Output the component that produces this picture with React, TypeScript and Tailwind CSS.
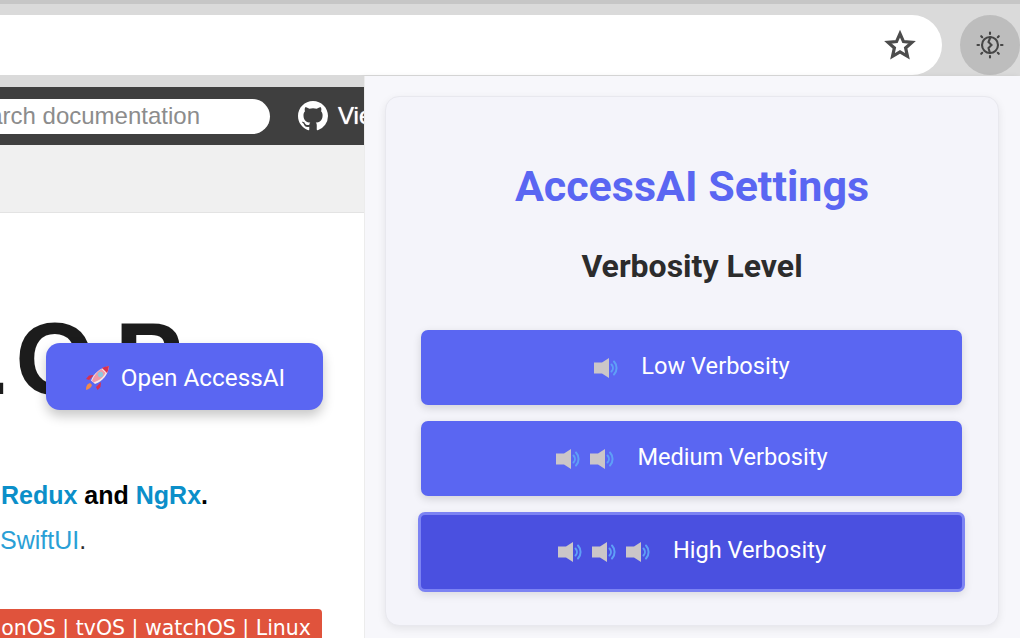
const Speaker = () => (
  <svg viewBox="0 0 26 22" className="h-[22px] w-[26px] shrink-0">
    <path d="M1 5.500h8L16 1v20l-7-4.500H1z" fill="#cbc6c8" />
    <path d="M18.500 7.500a5 5 0 0 1 0 7" fill="none" stroke="#5f9ff7" strokeWidth="2" strokeLinecap="round" />
    <path d="M21 4.500a9.500 9.500 0 0 1 0 13" fill="none" stroke="#5f9ff7" strokeWidth="2" strokeLinecap="round" />
  </svg>
)

const Rocket = () => (
  <svg viewBox="0 0 26 26" className="h-[26px] w-[26px] shrink-0">
    <path d="M2 25c0-4 1-6 4-7l2 2c-1 3-3 4-6 5z" fill="#f08a4b" />
    <path d="M5 15l5-5-5 .5-3 3.500z M12 22l5-5-.5 5-3 3z" fill="#d9304f" />
    <path d="M7 15.500C10 8 16 3 25 1c-1 9-6 15-14 18z" fill="#f4e9ea" />
    <path d="M9.500 17.500L8 15.500C11 9 14 6 17.500 4l4 4c-2 4-5 7-12 9.500z" fill="#ef5a6f" fillOpacity="0.55" />
    <path d="M18 3c2-1 4.500-1.700 7-2-.3 2.500-1 5-2 7z" fill="#d9304f" />
    <circle cx="16.500" cy="9.500" r="2.700" fill="#8fc7de" />
  </svg>
)

const GithubMark = () => (
  <svg viewBox="0 0 16 16" className="h-[30px] w-[30px] shrink-0" fill="#ffffff">
    <path d="M8 0C3.580 0 0 3.580 0 8c0 3.540 2.290 6.530 5.470 7.590.4.070.55-.17.55-.38 0-.19-.01-.82-.01-1.490-2.010.37-2.530-.49-2.690-.94-.09-.23-.48-.94-.82-1.130-.28-.15-.68-.52-.01-.53.630-.01 1.080.58 1.230.82.720 1.210 1.870.87 2.330.66.070-.52.280-.87.510-1.070-1.780-.2-3.640-.89-3.640-3.950 0-.87.310-1.590.820-2.150-.08-.2-.36-1.020.08-2.120 0 0 .67-.21 2.200.82.640-.18 1.320-.27 2-.27s1.360.09 2 .27c1.530-1.040 2.200-.82 2.200-.82.440 1.100.16 1.920.08 2.120.51.56.82 1.270.82 2.150 0 3.070-1.870 3.750-3.650 3.950.290.250.540.730.540 1.480 0 1.070-.01 1.930-.01 2.200 0 .21.150.46.550.38A8.010 8.010 0 0 0 16 8c0-4.420-3.580-8-8-8z" />
  </svg>
)

const levels = [
  { label: 'Low Verbosity', icons: 1, box: 'h-[75px] bg-[#5a66f2] ml-[35px] mr-[36px] mb-[16px] shadow-[0_3px_8px_rgba(0,0,0,0.14)]' },
  { label: 'Medium Verbosity', icons: 2, box: 'h-[75px] bg-[#5a66f2] ml-[35px] mr-[36px] mb-[16px] shadow-[0_3px_8px_rgba(0,0,0,0.14)]' },
  { label: 'High Verbosity', icons: 3, box: 'h-[80px] bg-[#4a50e0] ml-[32px] mr-[33px] border-[3px] border-[#7c83f3] shadow-[0_3px_8px_rgba(0,0,0,0.1)]' },
]

export default function App() {
  return (
    <div className="h-[638px] w-[1020px] overflow-hidden bg-[#dadada] font-['Liberation_Sans',sans-serif]">
      <div className="h-[4px] bg-[#c6c6c6]" />
      <div className="flex h-[72px] items-start">
        <div className="mt-[11px] flex h-[60px] w-[942px] items-center justify-end rounded-r-[30px] bg-white pr-[26px]">
          <svg viewBox="0 0 24 24" className="h-[32px] w-[32px]" fill="none" stroke="#4c4c4c" strokeWidth="2.400" strokeLinejoin="miter">
            <path d="M12 3.500l2.600 5.900 6.400.6-4.800 4.200 1.400 6.300L12 17.200l-5.600 3.300 1.400-6.300L3 10l6.400-.6z" />
          </svg>
        </div>
        <div className="ml-[18px] mt-[11px] flex h-[60px] w-[60px] items-center justify-center rounded-full bg-[#bdbdbd]">
          <svg viewBox="0 0 28 28" className="h-[28px] w-[28px]" fill="none" stroke="#464646" strokeWidth="2.100" strokeLinecap="round">
            <circle cx="14" cy="14" r="8" />
            <path d="M14.500 6l-2 5 3 3-3 3 1.500 5M14 1.500v1.500M14 25v1.500M1.500 14H3M25 14h1.500M5.200 5.200l1 1M21.800 21.800l1 1M22.800 5.200l-1 1M6.200 21.800l-1 1" />
          </svg>
        </div>
      </div>

      <div className="flex h-[562px]">
        <div className="relative w-[364px] shrink-0 overflow-hidden bg-white">
          <div className="h-[11px] bg-[#dadada]" />
          <div className="flex h-[58px] items-center gap-[28px] overflow-hidden bg-[#3f3f3f]">
            <div className="flex h-[35px] w-[270px] shrink-0 items-center justify-end overflow-hidden rounded-r-[18px] bg-white pr-[70px] text-[24px] whitespace-nowrap text-[#8c8c8c]">
              Search documentation
            </div>
            <GithubMark />
            <span className="-ml-[18px] text-[24px] whitespace-nowrap text-white [text-shadow:0_0_1px_#ffffff]">View</span>
          </div>
          <div className="h-[68px] border-b border-[#e3e3e3] bg-[#f0f0f0]" />
          <div className="-ml-[56px] mt-[98px] h-[96px] text-[102px] leading-[96px] font-bold whitespace-nowrap text-[#1c1c1c]">
            <span className="tracking-[9px]">L</span>
            <span className="tracking-[20px]">O</span>P
          </div>
          <div className="mt-[74px] pl-[1px] text-[25px] leading-[28px] font-bold whitespace-nowrap text-black">
            <span className="text-[#0b8fc9]">Redux</span> and <span className="text-[#0b8fc9]">NgRx</span>.
          </div>
          <div className="mt-[17px] text-[25px] leading-[28px] whitespace-nowrap text-[#2d2d2d]">
            <span className="text-[#2a9fd6]">SwiftUI</span>.
          </div>
          <div className="mt-[55px] flex h-[40px] w-[322px] justify-end overflow-hidden rounded-r-[4px] bg-[#e0533c] pt-[4px] pr-[11px] font-['DejaVu_Sans',sans-serif] text-[20.500px] whitespace-nowrap text-white">
            onOS | tvOS | watchOS | Linux
          </div>
          <div className="absolute top-[267px] left-[46px] flex h-[67px] w-[277px] items-center justify-center gap-[11px] rounded-[14px] bg-[#5a66f2] pt-[3px] font-['Roboto',sans-serif] text-[24.300px] text-white shadow-[0_6px_12px_rgba(0,0,0,0.22)]">
            <Rocket />
            Open AccessAI
          </div>
        </div>

        <div className="flex-1 border-l border-[#ececec] bg-[#f7f7fb] pt-[20px] pr-[21px] pl-[20px] shadow-[-2px_0_5px_rgba(0,0,0,0.06)]">
          <div className="h-[530px] rounded-[14px] border border-[#e8e8ee] bg-[#f4f4fa] shadow-[0_3px_8px_rgba(0,0,0,0.08)]">
            <h1 className="mt-[61px] text-center font-['Roboto',sans-serif] text-[43px] leading-[56px] font-bold text-[#5a66f2]">
              AccessAI Settings
            </h1>
            <h2 className="mt-[31px] text-center font-['Roboto',sans-serif] text-[32px] leading-[42px] font-bold text-[#2c2c2c]">
              Verbosity Level
            </h2>
            <div className="mt-[43px]">
              {levels.map((level) => (
                <div
                  key={level.label}
                  className={`flex items-center justify-center gap-[22px] rounded-[7px] font-['Roboto',sans-serif] text-[23.600px] text-white ${level.box}`}
                >
                  <div className="flex gap-[8px]">
                    {Array.from({ length: level.icons }).map((_, i) => (
                      <Speaker key={i} />
                    ))}
                  </div>
                  <span className="pb-[2px]">{level.label}</span>
                </div>
              ))}
            </div>
          </div>
        </div>
      </div>
    </div>
  )
}
